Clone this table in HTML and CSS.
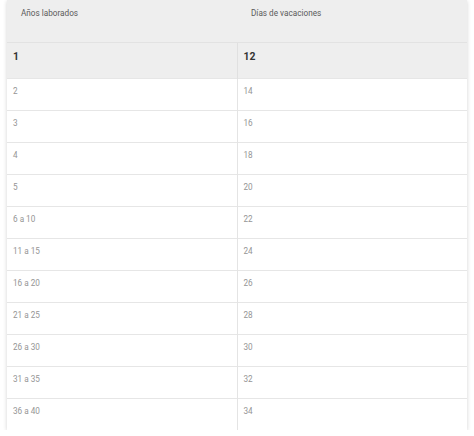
FILE: index.html
```html
<!DOCTYPE html>
<html lang="es">
<head>
<meta charset="utf-8">
<link rel="stylesheet" href="styles.css">
</head>
<body>
<div class="wrap">
<table class="tbl">
<thead>
<tr class="head"><th>Años laborados</th><th>Días de vacaciones</th></tr>
</thead>
<tbody>
<tr class="first"><td>1</td><td>12</td></tr>
<tr><td>2</td><td>14</td></tr>
<tr><td>3</td><td>16</td></tr>
<tr><td>4</td><td>18</td></tr>
<tr><td>5</td><td>20</td></tr>
<tr><td>6 a 10</td><td>22</td></tr>
<tr><td>11 a 15</td><td>24</td></tr>
<tr><td>16 a 20</td><td>26</td></tr>
<tr><td>21 a 25</td><td>28</td></tr>
<tr><td>26 a 30</td><td>30</td></tr>
<tr><td>31 a 35</td><td>32</td></tr>
<tr><td>36 a 40</td><td>34</td></tr>
</tbody>
</table>
</div>
</body>
</html>
```
FILE: styles.css
```css
html, body {
  margin: 0;
  padding: 0;
  background: #fff;
}
body {
  font-family: Roboto, "Liberation Sans", sans-serif;
  overflow: hidden;
}
.wrap {
  padding: 0 7px;
}
.tbl {
  width: 460px;
  border-collapse: collapse;
  table-layout: fixed;
  box-shadow: 0 1px 4px rgba(0,0,0,0.18);
}
.tbl th {
  background: #eeeeee;
  color: #5a5a5a;
  font-weight: 400;
  font-size: 8.2px;
  text-align: left;
  vertical-align: top;
  height: 42px;
  box-sizing: border-box;
  padding: 8px 14px 0;
  border-bottom: 1px solid #e2e2e2;
}
.tbl td {
  height: 32px;
  box-sizing: border-box;
  padding: 7px 6px 0;
  vertical-align: top;
  font-size: 8.2px;
  color: #959595;
  border-top: 1px solid #e6e6e6;
  border-left: 1px solid #e4e4e4;
}
.tbl td:first-child {
  border-left: none;
}
.tbl tr.first td {
  background: #eeeeee;
  height: 36px;
  padding-top: 7px;
  font-weight: 700;
  font-size: 10.4px;
  color: #333;
  border-top: none;
  border-left-color: #e0e0e0;
}
```
